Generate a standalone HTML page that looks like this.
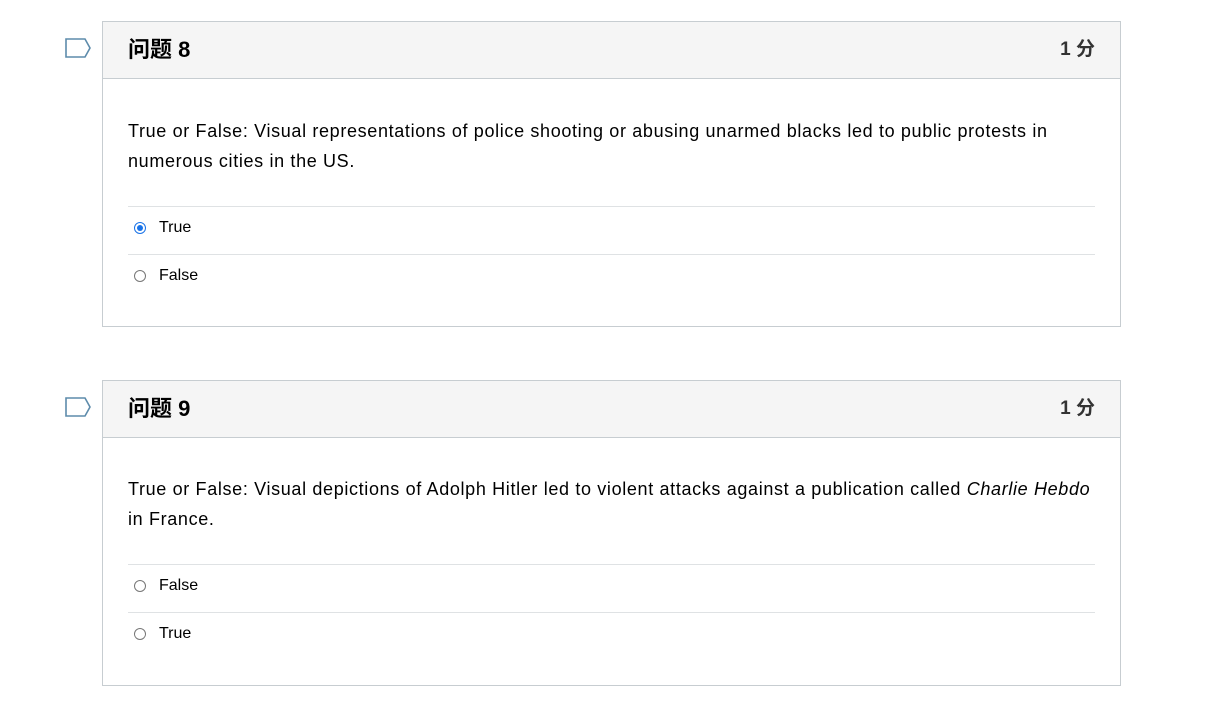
<!DOCTYPE html>
<html><head><meta charset="utf-8"><style>
body{margin:0;background:#fff;font-family:"Liberation Sans","Noto Sans CJK SC",sans-serif;color:#2d3b45;width:1206px;height:726px;position:relative;overflow:hidden}
.flag{position:absolute;left:65px}
.box{position:absolute;left:102px;width:1017px;height:304px;border:1px solid #c7cdd1;background:#fff}
.hd{height:56px;background:#f5f5f5;border-bottom:1px solid #c7cdd1;position:relative}
.hd .t{position:absolute;left:25px;top:10px;font-size:22px;font-weight:bold;color:#000}
.hd .p{position:absolute;right:25px;top:12px;font-size:19px;font-weight:bold;color:#333}
.q{position:absolute;left:25px;font-size:18px;line-height:30px;color:#000;letter-spacing:0.65px}
.opts{position:absolute;left:25px;width:967px}
.o{height:47px;border-top:1px solid #dfe2e4;position:relative;font-size:16px;color:#000}
.o span{position:absolute;left:31px;top:12px}
.r{position:absolute;left:6px;top:15px;width:12px;height:12px;border:1px solid #777;border-radius:50%;box-sizing:border-box}
.r.on{border:1px solid #1a73e8}
.r.on:after{content:"";position:absolute;left:2px;top:2px;width:6px;height:6px;border-radius:50%;background:#1a73e8}
</style></head><body>
<svg class="flag" style="top:38px" width="26" height="20"><path d="M1 1H20L25 10L20 19H1Z" fill="none" stroke="#5d8bab" stroke-width="1.6"/></svg>
<div class="box" style="top:21px">
 <div class="hd"><div class="t">问题 8</div><div class="p">1 分</div></div>
 <div class="q" style="top:94px;width:990px">True or False: Visual representations of police shooting or abusing unarmed blacks led to public protests in numerous cities in the US.</div>
 <div class="opts" style="top:184px">
  <div class="o"><div class="r on"></div><span>True</span></div>
  <div class="o"><div class="r"></div><span>False</span></div>
 </div>
</div>
<svg class="flag" style="top:397px" width="26" height="20"><path d="M1 1H20L25 10L20 19H1Z" fill="none" stroke="#5d8bab" stroke-width="1.6"/></svg>
<div class="box" style="top:380px">
 <div class="hd"><div class="t">问题 9</div><div class="p">1 分</div></div>
 <div class="q" style="top:93px;width:975px">True or False: Visual depictions of Adolph Hitler led to violent attacks against a publication called <i>Charlie Hebdo</i> in France.</div>
 <div class="opts" style="top:183px">
  <div class="o"><div class="r"></div><span>False</span></div>
  <div class="o"><div class="r"></div><span>True</span></div>
 </div>
</div>
</body></html>
